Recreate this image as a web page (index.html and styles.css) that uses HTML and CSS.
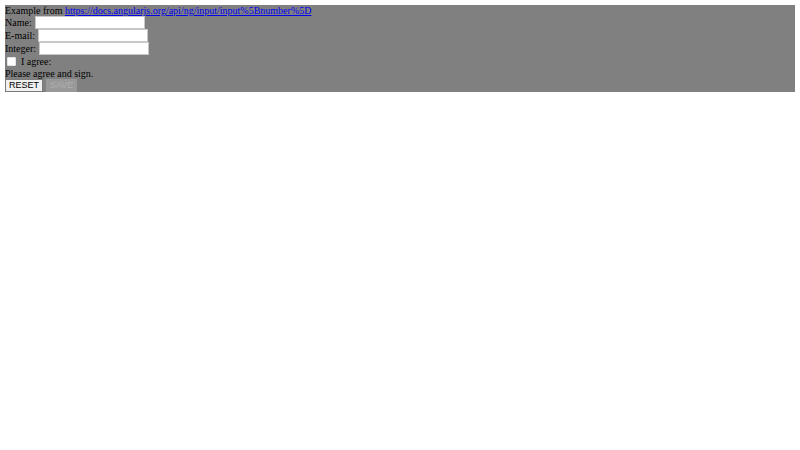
FILE: index.html
```html
<!DOCTYPE html>
<html>
<head>
<meta charset="utf-8">
<link rel="stylesheet" href="styles.css">
</head>
<body>
<div class="panel">
  <div class="line">Example from <a href="https://docs.angularjs.org/api/ng/input/input%5Bnumber%5D">https://docs.angularjs.org/api/ng/input/input%5Bnumber%5D</a></div>
  <form class="form">
    <label class="row">Name: <input class="field" type="text"></label>
    <label class="row">E-mail: <input class="field" type="email"></label>
    <label class="row">Integer: <input class="field" type="text"></label>
    <label class="row"><input class="check" type="checkbox"> I agree:</label>
    <div class="line">Please agree and sign.</div>
    <div class="buttons">
      <button class="btn" type="button">RESET</button>
      <button class="btn" type="button" disabled>SAVE</button>
    </div>
  </form>
</div>
</body>
</html>
```
FILE: styles.css
```css
html, body {
  margin: 0;
  padding: 0;
  background: #ffffff;
}
body {
  padding: 5px;
  font-family: "Liberation Serif", "Times New Roman", serif;
  font-size: 10px;
  color: #000000;
}
.panel {
  background: #808080;
}
.panel a {
  color: #0000ee;
}
.form {
  margin: 0;
}
.line {
  display: block;
  height: 11px;
  line-height: 11px;
}
.row {
  display: flex;
  align-items: center;
  height: 13px;
  line-height: 13px;
}
.field {
  box-sizing: border-box;
  width: 110px;
  height: 13px;
  margin: 0 0 0 3px;
  padding: 0 2px;
  border: 1px solid #c8c8c8;
  background: #ffffff;
  font-size: 9px;
  font-family: "Liberation Sans", Arial, sans-serif;
}
.check {
  appearance: none;
  -webkit-appearance: none;
  box-sizing: border-box;
  width: 9px;
  height: 9px;
  margin: 0 5px 0 2px;
  border: 1px solid #e6e6e6;
  border-radius: 1px;
  background: #ffffff;
}
.buttons {
  display: flex;
  gap: 3px;
  height: 13px;
}
.btn {
  box-sizing: border-box;
  height: 13px;
  padding: 0 3px;
  margin: 0;
  font-family: "Liberation Sans", Arial, sans-serif;
  font-size: 9px;
  line-height: 11px;
  border: 1px solid #7a7a7a;
  border-radius: 0;
  background: #f0f0f0;
  color: #000000;
}
.btn:disabled {
  color: #b0b0b0;
  background: #999999;
  border-color: #999999;
}
```
